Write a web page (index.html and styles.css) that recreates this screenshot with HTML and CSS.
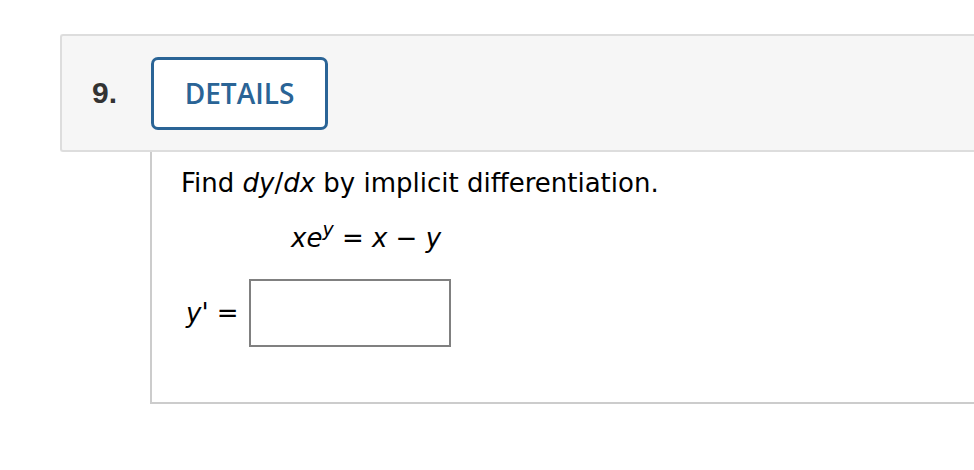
FILE: index.html
```html
<!DOCTYPE html>
<html>
<head>
<meta charset="utf-8">
<link rel="stylesheet" href="styles.css">
</head>
<body>
<div class="question">
  <div class="q-header">
    <span class="q-num">9.</span>
    <button class="details-btn">DETAILS</button>
  </div>
  <div class="q-body">
    <p class="prompt">Find <i>dy</i>/<i>dx</i> by implicit differentiation.</p>
    <p class="equation"><i>xe</i><sup><i>y</i></sup> = <i>x</i> − <i>y</i></p>
    <div class="answer-row">
      <span class="answer-label"><i>y</i><i class="prime">'</i> =</span>
      <input class="answer-input" type="text">
    </div>
  </div>
</div>
</body>
</html>
```

FILE: styles.css
```css
html, body {
  margin: 0;
  padding: 0;
  background: #ffffff;
}

.question {
  margin-top: 34px;
  margin-left: 60px;
}

.q-header {
  display: flex;
  align-items: center;
  height: 114px;
  background: #f6f6f6;
  border: 2px solid #dddddd;
  border-right: none;
  border-radius: 3px 0 0 3px;
  padding-left: 30px;
}

.q-num {
  font-family: "Liberation Sans", Arial, sans-serif;
  font-weight: bold;
  font-size: 30px;
  color: #333333;
  width: 59px;
}

.details-btn {
  box-sizing: border-box;
  width: 177px;
  height: 73px;
  border: 3px solid #2a6496;
  border-radius: 7px;
  background: #ffffff;
  color: #2a6496;
  font-family: "Open Sans", sans-serif;
  font-weight: 600;
  font-size: 28px;
  padding: 0;
}

.q-body {
  margin-left: 90px;
  height: 252px;
  border-left: 2px solid #cccccc;
  border-bottom: 2px solid #cccccc;
  padding-left: 29px;
  font-family: "DejaVu Sans", Verdana, sans-serif;
  font-size: 26px;
  color: #000000;
  box-sizing: border-box;
  padding-top: 16px;
}

.prompt {
  margin: 0;
  line-height: 30px;
}

.equation {
  margin: 25px 0 0 110px;
  line-height: 30px;
}

.equation sup {
  font-size: 19px;
  vertical-align: 11px;
  line-height: 0;
}

.answer-row {
  display: flex;
  align-items: center;
  margin-top: 26px;
  margin-left: 5px;
}

.answer-label {
  margin-right: 10px;
  line-height: 30px;
}

.answer-input {
  box-sizing: border-box;
  width: 202px;
  height: 68px;
  border: 2px solid #808080;
  border-radius: 0;
  background: #ffffff;
  margin: 0;
}
```
